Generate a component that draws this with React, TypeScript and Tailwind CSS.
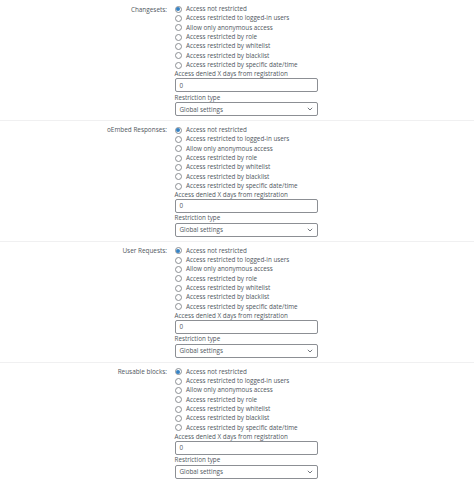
import React from "react";

const options = [
  "Access not restricted",
  "Access restricted to logged-in users",
  "Allow only anonymous access",
  "Access restricted by role",
  "Access restricted by whitelist",
  "Access restricted by blacklist",
  "Access restricted by specific date/time",
];

const sections = ["Changesets:", "oEmbed Responses:", "User Requests:", "Reusable blocks:"];

function Radio({ checked }: { checked: boolean }) {
  return (
    <span className="flex h-[7px] w-[7px] shrink-0 items-center justify-center rounded-full border border-[#8c8f94] bg-white">
      {checked && <span className="h-[3.5px] w-[3.5px] rounded-full bg-[#3582c4]" />}
    </span>
  );
}

function Section({ label, last }: { label: string; last: boolean }) {
  return (
    <div className={`flex pt-[4.5px] pb-[3.6px] ${last ? "" : "border-b border-[#f0f0f1]"}`}>
      <div className="w-[167px] shrink-0 text-right text-[6.4px] leading-[9.33px] text-[#50575e]">
        {label}
      </div>
      <div className="ml-[7.5px] flex flex-col">
        {options.map((o, i) => (
          <div key={o} className="flex h-[9.33px] items-center gap-[4.5px]">
            <Radio checked={i === 0} />
            <span className="text-[6.3px] leading-none text-[#50575e]">{o}</span>
          </div>
        ))}
        <div className="flex h-[8px] items-center text-[6.3px] text-[#50575e]">Access denied X days from registration</div>
        <div className="mt-[0.5px] flex h-[14px] w-[143px] items-center rounded-[2px] border border-[#8c8f94] bg-white pl-[4px] text-[6.3px] text-[#50575e]">
          0
        </div>
        <div className="flex h-[10px] items-center text-[6.3px] text-[#50575e]">Restriction type</div>
        <div className="flex h-[14px] w-[143px] items-center justify-between rounded-[2px] border border-[#8c8f94] bg-white pl-[4px] pr-[4px] text-[6.3px] text-[#50575e]">
          <span>Global settings</span>
          <svg width="6" height="4" viewBox="0 0 6 4" fill="none">
            <path d="M0.8 0.8 L3 3 L5.2 0.8" stroke="#646970" strokeWidth="0.9" />
          </svg>
        </div>
      </div>
    </div>
  );
}

export default function App() {
  return (
    <div className="h-[485px] w-[474px] overflow-hidden bg-white" style={{ fontFamily: '"Open Sans", "Noto Sans", sans-serif' }}>
      {sections.map((s, i) => (
        <Section key={s} label={s} last={i === sections.length - 1} />
      ))}
    </div>
  );
}
